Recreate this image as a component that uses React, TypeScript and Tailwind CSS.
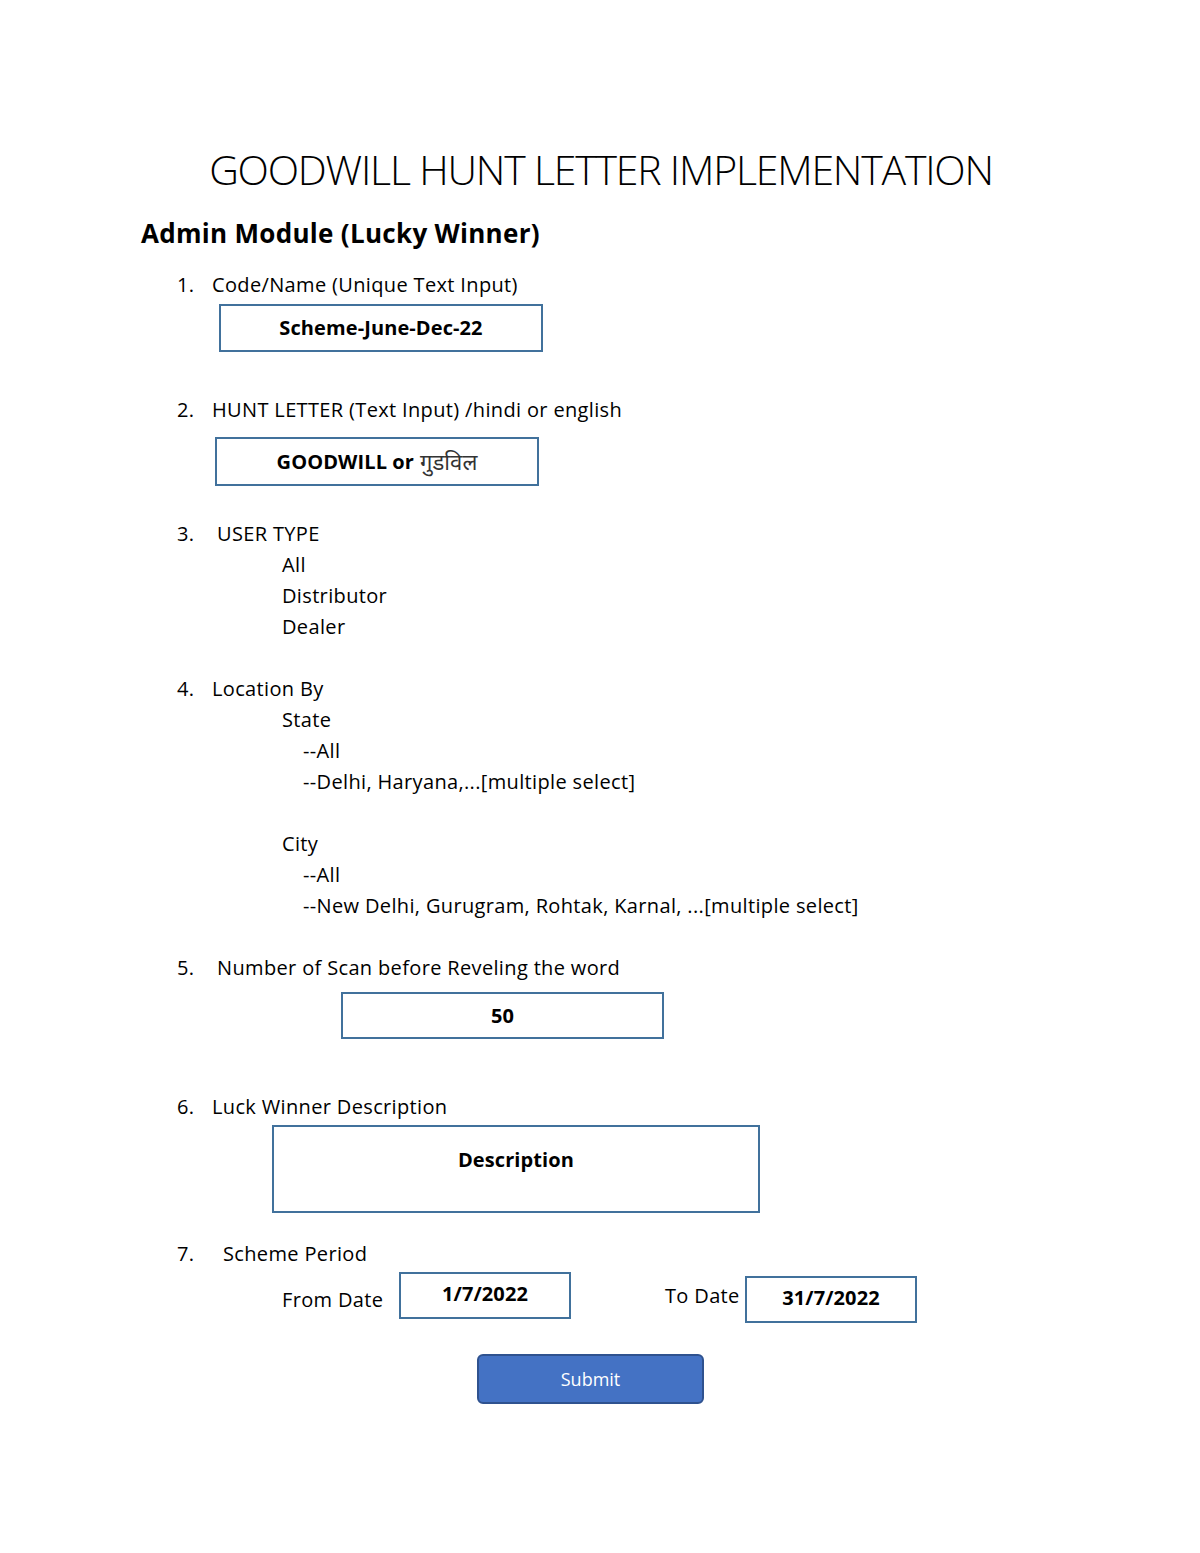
const font = { fontFamily: '"Open Sans", "Liberation Sans", "Noto Sans Devanagari", "Noto Sans", sans-serif' };

const Box = ({ className, children }: { className: string; children: React.ReactNode }) => (
  <div className={`border-2 border-[#41719c] bg-white flex justify-center font-bold text-[20px] tracking-[0.1px] ${className}`}>
    {children}
  </div>
);

const Line = ({ num, numPad, children }: { num?: string; numPad?: string; children: React.ReactNode }) => (
  <div className="flex h-[31px] leading-[31px] pl-[177px]">
    {num && <span className={numPad}>{num}</span>}
    <span>{children}</span>
  </div>
);

const Sub = ({ indent, children }: { indent: string; children?: React.ReactNode }) => (
  <div className={`h-[31px] leading-[31px] ${indent}`}>{children}</div>
);

export default function App() {
  return (
    <div className="w-[1200px] min-h-[1553px] bg-white text-black text-[20px] tracking-[0.35px]" style={font}>
      <h1 className="pt-[140px] h-[198px] leading-[58px] text-center text-[41px] font-light tracking-[-1.2px] pl-[2px]">
        GOODWILL HUNT LETTER IMPLEMENTATION
      </h1>

      <h2 className="mt-[20px] h-[31px] leading-[31px] pl-[141px] text-[26px] font-bold tracking-[0.3px]">
        Admin Module (Lucky Winner)
      </h2>

      {/* 1 */}
      <div className="mt-[20px]">
        <Line num="1." numPad="w-[35px]">Code/Name (Unique Text Input)</Line>
      </div>
      <div className="pl-[219px] mt-[4px]">
        <Box className="w-[324px] h-[48px] items-center">Scheme-June-Dec-22</Box>
      </div>

      {/* 2 */}
      <div className="mt-[42px]">
        <Line num="2." numPad="w-[35px]">HUNT LETTER (Text Input) /hindi or english</Line>
      </div>
      <div className="pl-[215px] mt-[12px]">
        <Box className="w-[324px] h-[49px] items-center">
          GOODWILL or<span className="font-normal text-[#333] text-[22px] ml-[6px]">गुडविल</span>
        </Box>
      </div>

      {/* 3 */}
      <div className="mt-[32px]">
        <Line num="3." numPad="w-[40px]">USER TYPE</Line>
        <Sub indent="pl-[282px]">All</Sub>
        <Sub indent="pl-[282px]">Distributor</Sub>
        <Sub indent="pl-[282px]">Dealer</Sub>
      </div>

      {/* 4 */}
      <div className="mt-[31px]">
        <Line num="4." numPad="w-[35px]">Location By</Line>
        <Sub indent="pl-[282px]">State</Sub>
        <Sub indent="pl-[303px]">--All</Sub>
        <Sub indent="pl-[303px]">--Delhi, Haryana,...[multiple select]</Sub>
        <Sub indent="pl-[303px]" />
        <Sub indent="pl-[282px]">City</Sub>
        <Sub indent="pl-[303px]">--All</Sub>
        <Sub indent="pl-[303px]">--New Delhi, Gurugram, Rohtak, Karnal, ...[multiple select]</Sub>
      </div>

      {/* 5 */}
      <div className="mt-[31px]">
        <Line num="5." numPad="w-[40px]">Number of Scan before Reveling the word</Line>
      </div>
      <div className="pl-[341px] mt-[9px]">
        <Box className="w-[323px] h-[47px] items-center">50</Box>
      </div>

      {/* 6 */}
      <div className="mt-[52px]">
        <Line num="6." numPad="w-[35px]">Luck Winner Description</Line>
      </div>
      <div className="pl-[272px] mt-[3px]">
        <Box className="w-[488px] h-[88px] items-start pt-[18px]">Description</Box>
      </div>

      {/* 7 */}
      <div className="mt-[25px]">
        <Line num="7." numPad="w-[46px]">Scheme Period</Line>
      </div>
      <div className="flex items-start pl-[282px] mt-[3px]">
        <div className="w-[117px] h-[31px] leading-[31px] mt-[12px]">From Date</div>
        <Box className="w-[172px] h-[47px] items-center pb-[3px]">1/7/2022</Box>
        <div className="ml-[94px] w-[80px] h-[31px] leading-[31px] mt-[8px]">To Date</div>
        <Box className="w-[172px] h-[47px] items-center mt-[4px] pb-[3px]">31/7/2022</Box>
      </div>

      <div className="pl-[477px] mt-[31px]">
        <button className="w-[227px] h-[50px] rounded-[6px] bg-[#4472c4] border-2 border-[#2f528f] text-white text-[18px] tracking-normal">
          Submit
        </button>
      </div>
    </div>
  );
}
